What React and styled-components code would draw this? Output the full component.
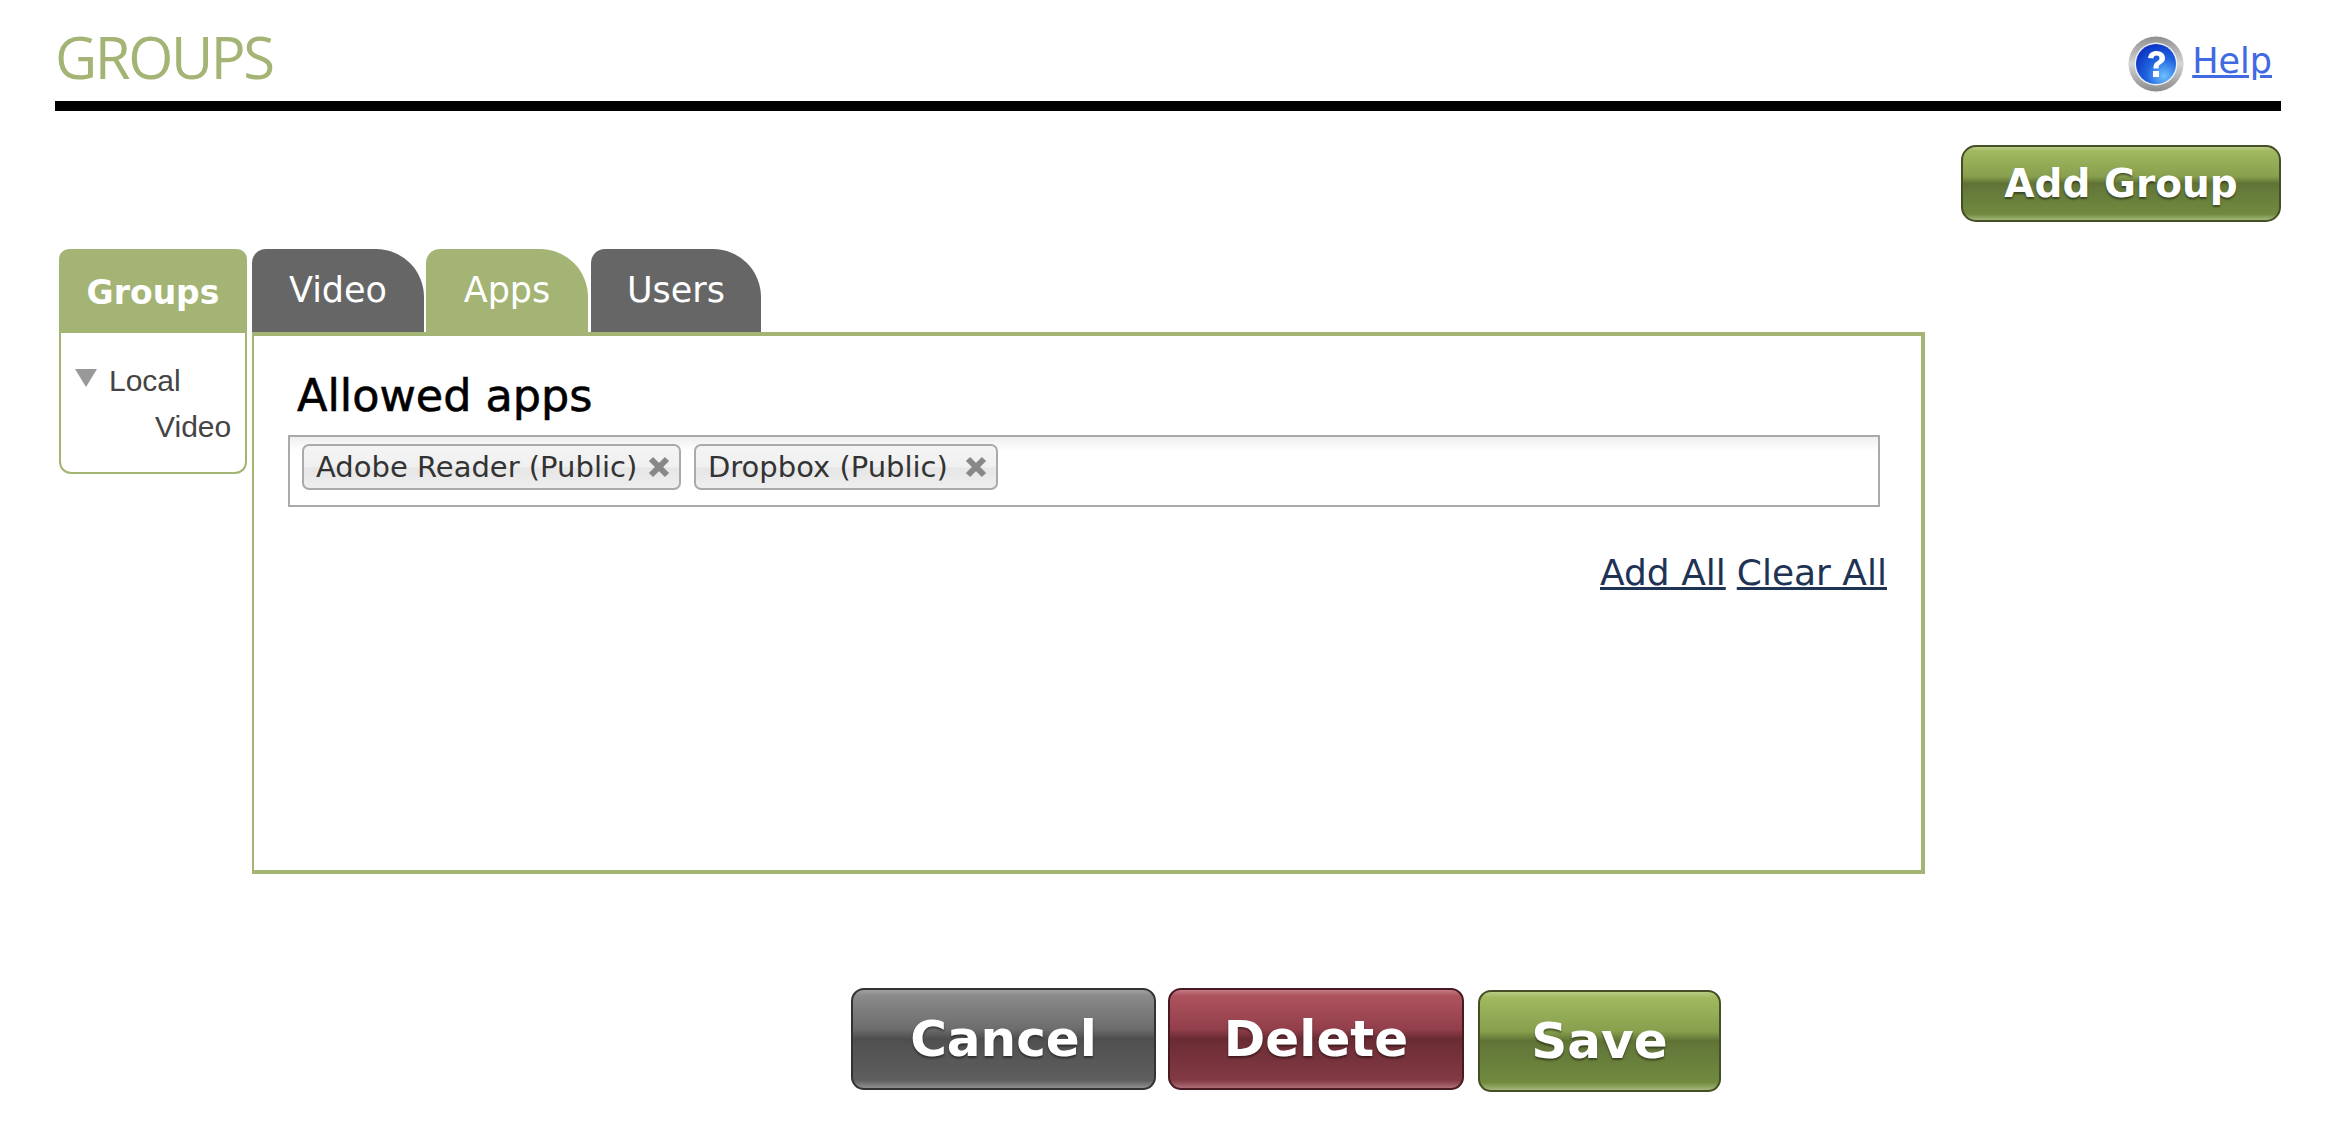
import React from 'react';
import styled, { createGlobalStyle, css } from 'styled-components';

const GlobalStyle = createGlobalStyle`
  html, body {
    margin: 0;
    background: #fff;
    font-family: "DejaVu Sans", sans-serif;
  }
`;

const green = '#a3b474';

const skins = {
  green: css`
    border-color: #454f26;
    background: linear-gradient(#b9cb85 0, #a0b85e 6%, #88a04e 40%, #5f7234 50%, #64783a 56%, #708a3e 92%, #a3b77a 100%);
  `,
  grey: css`
    border-color: #333;
    background: linear-gradient(#a0a0a0 0, #8a8a8a 6%, #6c6c6c 40%, #4e4e4e 50%, #525252 56%, #5e5e5e 92%, #8f8f8f 100%);
  `,
  red: css`
    border-color: #4a1a22;
    background: linear-gradient(#c27a83 0, #ad535e 6%, #923f4b 40%, #692a32 50%, #6f2e36 56%, #823a43 92%, #ad6c75 100%);
  `
};

const Page = styled.div`
  width: 2226px;
  margin-left: 55px;
`;

const Header = styled.header`
  display: flex;
  justify-content: space-between;
  align-items: flex-end;
  height: 101px;
  border-bottom: 10px solid #000;
`;

const Title = styled.h1`
  margin: 0 0 9px;
  font-family: "Open Sans", sans-serif;
  font-weight: 400;
  font-size: 58px;
  line-height: 70px;
  letter-spacing: -2.4px;
  color: ${green};
`;

const HelpBox = styled.div`
  display: flex;
  align-items: center;
  gap: 8px;
  margin: 0 9px 9px 0;
`;

const HelpLink = styled.a`
  margin-top: -7px;
  font-size: 35px;
  line-height: 44px;
  color: #4169e1;
  text-decoration: underline;
`;

const GlossButton = styled.button`
  box-sizing: border-box;
  border: 2px solid;
  border-radius: ${p => (p.$big ? '13px' : '15px')};
  padding: 0;
  width: ${p => p.$w}px;
  height: ${p => (p.$big ? 102 : 77)}px;
  font-family: "DejaVu Sans", sans-serif;
  font-weight: 700;
  font-size: ${p => (p.$big ? 50 : 39)}px;
  color: #fff;
  text-shadow: 0 2px 2px rgba(0, 0, 0, 0.45);
  ${p => skins[p.$skin]}
`;

const ActionRow = styled.div`
  display: flex;
  justify-content: flex-end;
  margin-top: 34px;
`;

const Main = styled.main`
  display: flex;
  gap: 5px;
  margin-top: 27px;
  padding-left: 4px;
`;

const Sidebar = styled.aside`
  width: 188px;
`;

const SideHead = styled.div`
  height: 84px;
  line-height: 88px;
  text-align: center;
  background: ${green};
  border-radius: 10px 10px 0 0;
  color: #fff;
  font-weight: 700;
  font-size: 33px;
`;

const SideBody = styled.div`
  box-sizing: border-box;
  height: 141px;
  border: 2px solid ${green};
  border-top: 0;
  border-radius: 0 0 12px 12px;
  padding: 25px 0 0 14px;
  font-family: "Liberation Sans", sans-serif;
  font-size: 30px;
  line-height: 46px;
  color: #444;
`;

const TreeRow = styled.div`
  display: flex;
  align-items: center;
  gap: 12px;
  padding-left: ${p => p.$indent || 0}px;
`;

const Triangle = styled.span`
  width: 0;
  height: 0;
  margin-top: -6px;
  border-left: 11px solid transparent;
  border-right: 11px solid transparent;
  border-top: 18px solid #999;
`;

const Content = styled.div`
  width: 1673px;
`;

const TabBar = styled.nav`
  display: flex;
  height: 83px;
`;

const Tab = styled.a`
  box-sizing: border-box;
  width: ${p => p.$w}px;
  margin-right: ${p => p.$gap}px;
  line-height: 82px;
  text-align: center;
  font-size: 35px;
  color: #fff;
  text-decoration: none;
  background: ${p => (p.$active ? green : '#666')};
  border-radius: 14px 48px 0 0;
`;

const Panel = styled.section`
  box-sizing: border-box;
  height: 542px;
  border: 4px solid ${green};
  border-left-width: 2px;
  padding: 20px 29px 0 34px;
`;

const PanelTitle = styled.h2`
  margin: 0 0 0 9px;
  font-weight: 400;
  font-size: 44.5px;
  line-height: 79px;
  color: #000;
  -webkit-text-stroke: 0.6px #000;
`;

const TagBox = styled.div`
  box-sizing: border-box;
  display: flex;
  align-items: flex-start;
  gap: 13px;
  width: 1592px;
  height: 72px;
  border: 2px solid #aaa;
  padding: 7px 12px;
  background: linear-gradient(#eee 0, #fff 14px);
`;

const Tag = styled.span`
  box-sizing: border-box;
  display: flex;
  align-items: center;
  justify-content: space-between;
  width: ${p => p.$w}px;
  height: 46px;
  padding: 0 8px 0 12px;
  border: 2px solid #aaa;
  border-radius: 7px;
  background: linear-gradient(#f4f4f4 0, #f0f0f0 50%, #e6e6e6 52%, #eee 100%);
  font-size: 29px;
  color: #333;
`;

const CloseIcon = styled.svg`
  width: 24px;
  height: 24px;
  flex: none;
`;

const LinkRow = styled.div`
  display: flex;
  justify-content: flex-end;
  gap: 11px;
  margin: 40px 5px 0 0;
`;

const PlainLink = styled.a`
  font-size: 36px;
  line-height: 52px;
  color: #1f3355;
  text-decoration: underline;
`;

const Footer = styled.footer`
  display: flex;
  align-items: flex-start;
  gap: 12px;
  margin: 114px 0 0 796px;
`;

const SaveWrap = styled.div`
  margin: 2px 0 0 2px;
`;

function HelpIcon() {
  return (
    <svg width="56" height="56" viewBox="0 0 56 56">
      <defs>
        <radialGradient id="helpBall" cx="0.7" cy="0.8" r="0.9">
          <stop offset="0" stopColor="#6cc0ff" />
          <stop offset="0.5" stopColor="#1e62de" />
          <stop offset="1" stopColor="#0a2cc0" />
        </radialGradient>
        <linearGradient id="helpRing" x1="0" y1="0" x2="0" y2="1">
          <stop offset="0" stopColor="#8f8f8f" />
          <stop offset="0.5" stopColor="#d4d4d4" />
          <stop offset="1" stopColor="#8a8a8a" />
        </linearGradient>
      </defs>
      <circle cx="28" cy="28" r="27.5" fill="url(#helpRing)" />
      <circle cx="28" cy="28" r="21.5" fill="#e8eef8" />
      <circle cx="28" cy="28" r="20" fill="url(#helpBall)" />
      <path d="M20 22c1-5 4-7 8.500-7 5 0 8.500 3 8.500 7 0 3-1.500 4.500-4 6-2 1.200-2.500 2-2.500 4.500h-5c0-4 1-5.500 3.500-7 1.700-1 2.500-2 2.500-3.500s-1-2.500-2.800-2.500c-2 0-3 1-3.500 3z" fill="#fff" />
      <rect x="25" y="35" width="6" height="6" fill="#fff" />
    </svg>
  );
}

function TagClose() {
  return (
    <CloseIcon viewBox="0 0 24 24">
      <path d="M4 4l16 16M20 4L4 20" stroke="#888" strokeWidth="6" />
    </CloseIcon>
  );
}

export default function App() {
  return (
    <Page>
      <GlobalStyle />
      <Header>
        <Title>GROUPS</Title>
        <HelpBox>
          <HelpIcon />
          <HelpLink href="#">Help</HelpLink>
        </HelpBox>
      </Header>

      <ActionRow>
        <GlossButton $skin="green" $w={320}>Add Group</GlossButton>
      </ActionRow>

      <Main>
        <Sidebar>
          <SideHead>Groups</SideHead>
          <SideBody>
            <TreeRow>
              <Triangle />
              Local
            </TreeRow>
            <TreeRow $indent={80}>Video</TreeRow>
          </SideBody>
        </Sidebar>

        <Content>
          <TabBar>
            <Tab href="#" $w={172} $gap={2}>Video</Tab>
            <Tab href="#" $w={162} $gap={3} $active>Apps</Tab>
            <Tab href="#" $w={170} $gap={0}>Users</Tab>
          </TabBar>
          <Panel>
            <PanelTitle>Allowed apps</PanelTitle>
            <TagBox>
              <Tag $w={379}>Adobe Reader (Public)<TagClose /></Tag>
              <Tag $w={304}>Dropbox (Public)<TagClose /></Tag>
            </TagBox>
            <LinkRow>
              <PlainLink href="#">Add All</PlainLink>
              <PlainLink href="#">Clear All</PlainLink>
            </LinkRow>
          </Panel>
        </Content>
      </Main>

      <Footer>
        <GlossButton $big $skin="grey" $w={305}>Cancel</GlossButton>
        <GlossButton $big $skin="red" $w={296}>Delete</GlossButton>
        <SaveWrap>
          <GlossButton $big $skin="green" $w={243}>Save</GlossButton>
        </SaveWrap>
      </Footer>
    </Page>
  );
}
